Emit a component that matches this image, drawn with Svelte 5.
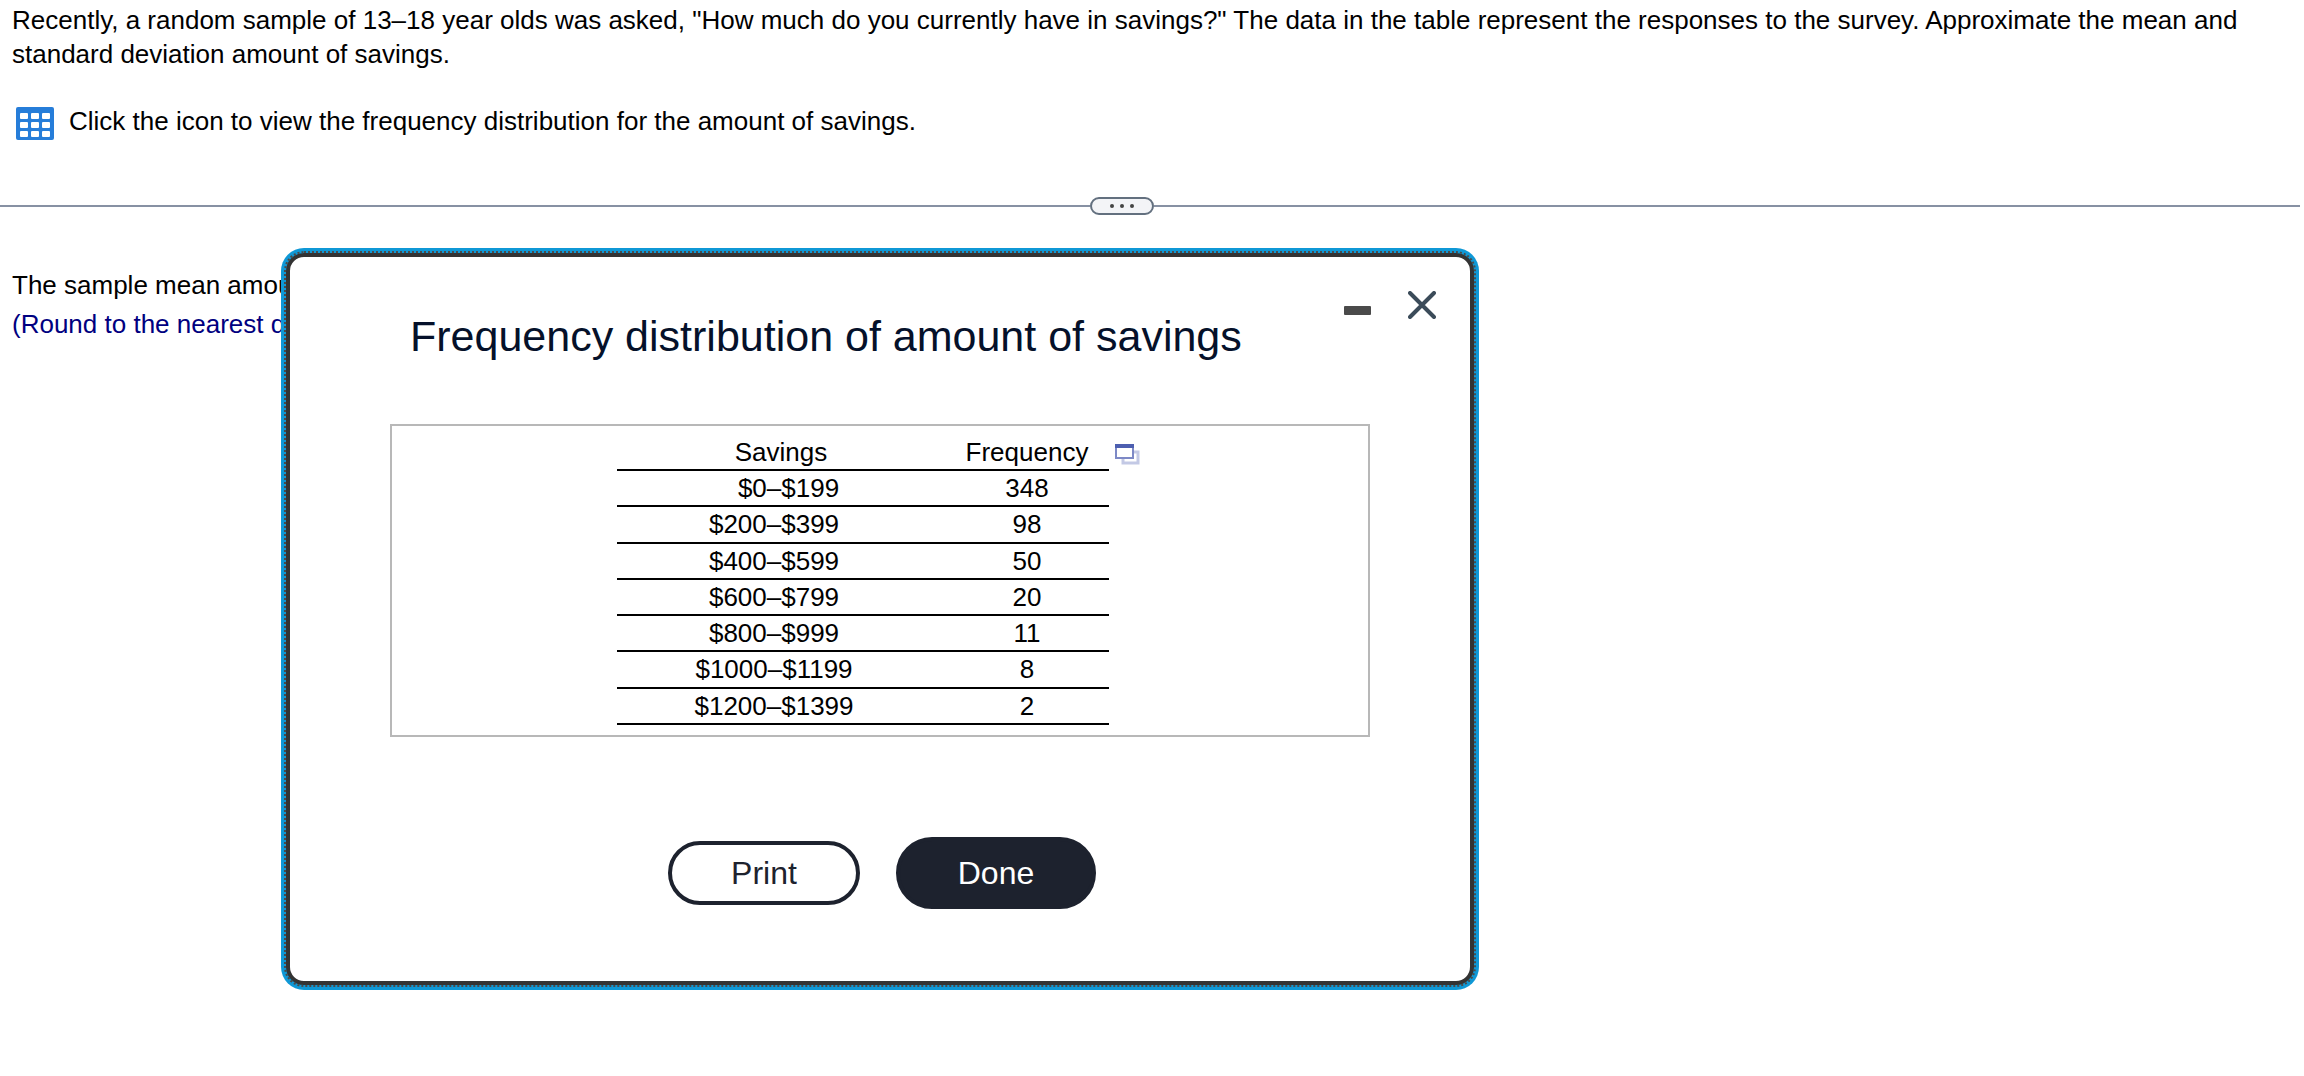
<script>
  let open = true;

  const rows = [
    { savings: "$0–$199", frequency: 348, indent: true },
    { savings: "$200–$399", frequency: 98 },
    { savings: "$400–$599", frequency: 50 },
    { savings: "$600–$799", frequency: 20 },
    { savings: "$800–$999", frequency: 11 },
    { savings: "$1000–$1199", frequency: 8 },
    { savings: "$1200–$1399", frequency: 2 },
  ];
</script>

<main>
  <section class="question">
    <p>
      Recently, a random sample of 13–18 year olds was asked, "How much do you
      currently have in savings?" The data in the table represent the responses
      to the survey. Approximate the mean and standard deviation amount of
      savings.
    </p>
    <div class="hint">
      <button
        class="bare"
        aria-label="View frequency distribution"
        on:click={() => (open = true)}
      >
        <svg width="38" height="34" viewBox="0 0 38 34">
          <rect width="38" height="33" rx="2" fill="#267dd9" />
          {#each [6, 15, 24] as y}
            {#each [4, 15, 26] as x}
              <rect {x} {y} width="8" height="6" rx="1" fill="#fff" />
            {/each}
          {/each}
        </svg>
      </button>
      <span>Click the icon to view the frequency distribution for the amount of savings.</span>
    </div>
  </section>

  <div class="divider">
    <span class="line before"></span>
    <button class="handle" aria-label="Resize">
      <i></i><i></i><i></i>
    </button>
    <span class="line after"></span>
  </div>

  <section class="answer">
    <p>The sample mean amount</p>
    <p class="note">(Round to the nearest dollar</p>
  </section>

  {#if open}
    <div class="dialog" role="dialog" aria-labelledby="dialog-title">
      <header>
        <h1 id="dialog-title">Frequency distribution of amount of savings</h1>
        <div class="controls">
          <button class="bare" aria-label="Minimize">
            <svg width="28" height="28" viewBox="0 0 28 28">
              <rect x="0" y="15" width="27" height="9" rx="1" fill="#4a4a4a" />
            </svg>
          </button>
          <button class="bare" aria-label="Close" on:click={() => (open = false)}>
            <svg width="28" height="28" viewBox="0 0 28 28">
              <path d="M2 2 26 26M26 2 2 26" stroke="#3b4b59" stroke-width="4" stroke-linecap="round" />
            </svg>
          </button>
        </div>
      </header>

      <div class="content">
        <table>
          <thead>
            <tr><th>Savings</th><th>Frequency</th></tr>
          </thead>
          <tbody>
            {#each rows as row}
              <tr>
                <td class="range" class:indent={row.indent}>{row.savings}</td>
                <td>{row.frequency}</td>
              </tr>
            {/each}
          </tbody>
        </table>
        <button class="bare copy" aria-label="Open data">
          <svg width="26" height="22" viewBox="0 0 26 22">
            <rect x="8" y="8" width="15" height="11" fill="#fff" stroke="#c3c9e5" stroke-width="3" />
            <rect x="1" y="1" width="17" height="13" fill="#fff" stroke="#7d89c6" stroke-width="2" />
            <path d="M0 0h19v4H0z" fill="#4d5fb0" />
          </svg>
        </button>
      </div>

      <footer>
        <button class="action">Print</button>
        <button class="action primary" on:click={() => (open = false)}>Done</button>
      </footer>
    </div>
  {/if}
</main>

<style>
  :global(body) {
    margin: 0;
    background: #fff;
  }

  main {
    position: relative;
    box-sizing: border-box;
    min-height: 100vh;
    padding-top: 3px;
    color: #000;
    font: 26px/34px "Liberation Sans", Arial, sans-serif;
  }

  p {
    margin: 0;
  }

  .question {
    padding: 0 12px;
  }

  .hint {
    display: flex;
    align-items: flex-start;
    gap: 15px;
    margin-top: 33px;
    padding-left: 4px;
  }

  button {
    font: inherit;
    cursor: pointer;
  }

  .bare {
    display: flex;
    padding: 0;
    border: none;
    background: none;
  }

  .hint .bare {
    padding-top: 3px;
  }

  svg {
    display: block;
    fill: none;
  }

  .divider {
    display: flex;
    align-items: center;
    margin: 56px 4px 0 0;
  }

  .line {
    height: 2px;
    background: #8791a3;
  }

  .before {
    flex: 1090;
  }

  .after {
    flex: 1146;
  }

  .handle {
    display: flex;
    align-items: center;
    justify-content: center;
    gap: 6px;
    box-sizing: border-box;
    width: 64px;
    height: 18px;
    padding: 0;
    border: 2px solid #63707f;
    border-radius: 9px;
    background: #f3f4f7;
  }

  .handle i {
    width: 4px;
    height: 4px;
    border-radius: 50%;
    background: #444;
  }

  .answer {
    margin-top: 51px;
    padding: 0 12px;
    line-height: 39px;
  }

  .note {
    color: #000080;
  }

  .dialog {
    position: absolute;
    top: 253px;
    left: 286px;
    box-sizing: border-box;
    width: 1188px;
    padding: 34px 34px 72px 100px;
    border: 4px solid #333;
    border-radius: 18px;
    outline: 2px dotted #4a4a4a;
    background: #fff;
    box-shadow: 0 0 0 5px #0f98d6;
  }

  header {
    display: flex;
    align-items: flex-start;
    justify-content: space-between;
  }

  h1 {
    margin: 19px 0 0 20px;
    color: #05112a;
    font-size: 43px;
    font-weight: 400;
    line-height: 52px;
  }

  .controls {
    display: flex;
    gap: 36px;
  }

  .content {
    display: flex;
    align-items: flex-start;
    margin: 62px 66px 0 0;
    padding: 9px 0 10px 225px;
    border: 2px solid #b8b8b8;
  }

  table {
    width: 492px;
    height: 290px;
    border-collapse: collapse;
    text-align: center;
  }

  th,
  td {
    height: 34px;
    padding: 0;
    border-bottom: 2px solid #000;
    font-weight: 400;
    vertical-align: top;
  }

  th:first-child {
    width: 328px;
  }

  .range {
    padding-right: 14px;
  }

  .indent {
    padding-left: 29px;
  }

  .copy {
    margin: 9px 0 0 6px;
  }

  footer {
    display: flex;
    align-items: center;
    justify-content: center;
    gap: 36px;
    margin: 100px 62px 0 0;
  }

  .action {
    box-sizing: border-box;
    width: 192px;
    height: 64px;
    border: 4px solid #1d222e;
    border-radius: 36px;
    background: #fff;
    color: #1d222e;
    font-size: 32px;
  }

  .primary {
    width: 200px;
    height: 72px;
    background: #1d222e;
    color: #fff;
  }
</style>
